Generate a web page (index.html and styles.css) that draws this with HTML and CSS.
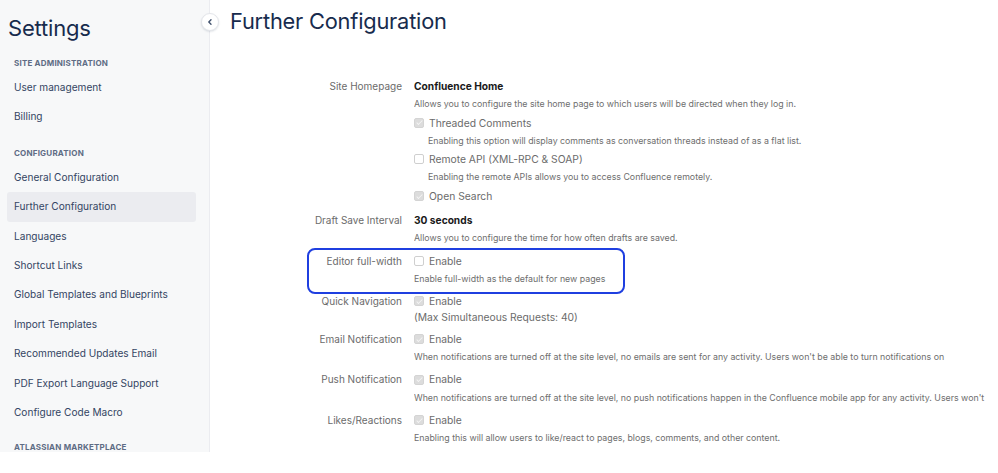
FILE: index.html
```html
<!DOCTYPE html>
<html lang="en">
<head>
  <meta charset="UTF-8">
  <meta name="viewport" content="width=device-width, initial-scale=1.0">
  <title>Further Configuration - Settings</title>
  <link rel="stylesheet" href="styles.css">
</head>
<body>

  <div class="layout">
    <!-- Settings sidebar -->
    <aside class="sidebar">
      <h2 class="sidebar-title">Settings</h2>

      <div class="nav-heading">Site administration</div>
      <a class="nav-item" href="#">User management</a>
      <a class="nav-item" href="#">Billing</a>

      <div class="nav-heading">Configuration</div>
      <a class="nav-item" href="#">General Configuration</a>
      <a class="nav-item selected" href="#">Further Configuration</a>
      <a class="nav-item" href="#">Languages</a>
      <a class="nav-item" href="#">Shortcut Links</a>
      <a class="nav-item" href="#">Global Templates and Blueprints</a>
      <a class="nav-item" href="#">Import Templates</a>
      <a class="nav-item" href="#">Recommended Updates Email</a>
      <a class="nav-item" href="#">PDF Export Language Support</a>
      <a class="nav-item" href="#">Configure Code Macro</a>

      <div class="nav-heading last">Atlassian Marketplace</div>
    </aside>

    <button class="collapse-btn" aria-label="Collapse sidebar">
      <svg width="8" height="8" viewBox="0 0 8 8">
        <path d="M5 1.8 L2.8 4 L5 6.2" fill="none" stroke="#42526e" stroke-width="1.4" stroke-linecap="round" stroke-linejoin="round"/>
      </svg>
    </button>

    <!-- Main content -->
    <main class="content">
      <h1 class="page-title">Further Configuration</h1>

      <div class="form">
        <div class="row">
          <div class="label">Site Homepage</div>
          <div class="field">
            <div class="value">Confluence Home</div>
            <div class="desc">Allows you to configure the site home page to which users will be directed when they log in.</div>
            <div class="check checked"><span class="box"></span>Threaded Comments</div>
            <div class="desc indent">Enabling this option will display comments as conversation threads instead of as a flat list.</div>
            <div class="check"><span class="box"></span>Remote API (XML-RPC &amp; SOAP)</div>
            <div class="desc indent">Enabling the remote APIs allows you to access Confluence remotely.</div>
            <div class="check checked"><span class="box"></span>Open Search</div>
          </div>
        </div>

        <div class="row wide-gap">
          <div class="label">Draft Save Interval</div>
          <div class="field">
            <div class="value">30 seconds</div>
            <div class="desc">Allows you to configure the time for how often drafts are saved.</div>
          </div>
        </div>

        <!-- highlighted row -->
        <div class="row highlight">
          <div class="label">Editor full-width</div>
          <div class="field">
            <div class="check"><span class="box"></span>Enable</div>
            <div class="desc">Enable full-width as the default for new pages</div>
          </div>
        </div>

        <div class="row">
          <div class="label">Quick Navigation</div>
          <div class="field">
            <div class="check checked"><span class="box"></span>Enable</div>
            <div class="note">(Max Simultaneous Requests: 40)</div>
          </div>
        </div>

        <div class="row">
          <div class="label">Email Notification</div>
          <div class="field">
            <div class="check checked"><span class="box"></span>Enable</div>
            <div class="desc">When notifications are turned off at the site level, no emails are sent for any activity. Users won't be able to turn notifications on</div>
          </div>
        </div>

        <div class="row">
          <div class="label">Push Notification</div>
          <div class="field">
            <div class="check checked"><span class="box"></span>Enable</div>
            <div class="desc">When notifications are turned off at the site level, no push notifications happen in the Confluence mobile app for any activity. Users won't</div>
          </div>
        </div>

        <div class="row">
          <div class="label">Likes/Reactions</div>
          <div class="field">
            <div class="check checked"><span class="box"></span>Enable</div>
            <div class="desc">Enabling this will allow users to like/react to pages, blogs, comments, and other content.</div>
          </div>
        </div>
      </div>
    </main>
  </div>

</body>
</html>
```

FILE: styles.css
```css
body {
  margin: 0;
  font-family: Inter, "Noto Sans", sans-serif;
  background-color: #fff;
  color: #172b4d;
  overflow: hidden;
}

.layout {
  display: flex;
  height: 452px;
  position: relative;
}

/* Sidebar */

.sidebar {
  width: 210px;
  flex-shrink: 0;
  box-sizing: border-box;
  background-color: #f7f8f9;
  border-right: 1px solid #ebecf0;
  padding: 12px 13px 0 7px;
  display: flex;
  flex-direction: column;
  overflow: hidden;
}

.sidebar-title {
  margin: 0 0 9px 1px;
  font-size: 22px;
  font-weight: 400;
  line-height: 32px;
  color: #172b4d;
  letter-spacing: -0.2px;
}

.nav-heading {
  flex-shrink: 0;
  margin-top: 11px;
  padding-left: 7px;
  height: 20px;
  line-height: 20px;
  font-size: 8px;
  font-weight: 700;
  text-transform: uppercase;
  letter-spacing: 0.2px;
  color: #5e6c84;
  white-space: nowrap;
}

.sidebar-title + .nav-heading {
  margin-top: 0;
}

.nav-heading.last {
  margin-top: 14px;
  height: 12px;
  line-height: 12px;
}

.nav-item {
  display: block;
  flex-shrink: 0;
  height: 29.4px;
  line-height: 29.4px;
  padding-left: 7px;
  border-radius: 3px;
  font-size: 10.1px;
  color: #344563;
  text-decoration: none;
  white-space: nowrap;
}

.nav-item.selected {
  background-color: #ebecf0;
}

.collapse-btn {
  position: absolute;
  left: 201px;
  top: 13px;
  width: 18px;
  height: 18px;
  padding: 0;
  border-radius: 50%;
  border: 1px solid #e4e6ea;
  background-color: #fff;
  box-shadow: 0 1px 2px rgba(9, 30, 66, 0.12);
  display: flex;
  align-items: center;
  justify-content: center;
  cursor: pointer;
}

/* Content */

.content {
  flex: 1;
  padding: 0 13px 0 20px;
  overflow: hidden;
}

.page-title {
  margin: 0;
  padding-top: 6px;
  font-size: 21.8px;
  font-weight: 400;
  line-height: 30px;
  color: #172b4d;
  letter-spacing: -0.2px;
  white-space: nowrap;
}

.form {
  margin-top: 41px;
}

.row {
  display: grid;
  grid-template-columns: 172px 1fr;
  column-gap: 12px;
  margin-top: 4px;
  line-height: 18.3px;
}

.row:first-child {
  margin-top: 0;
}

.row.wide-gap {
  margin-top: 6px;
}

.row.highlight {
  position: relative;
}

.row.highlight::after {
  content: "";
  position: absolute;
  left: 77px;
  top: -4px;
  width: 318px;
  height: 46px;
  box-sizing: border-box;
  border: 2px solid #1f3fe0;
  border-radius: 8px;
}

.label {
  text-align: right;
  font-size: 10px;
  color: #6b6b6b;
  white-space: nowrap;
}

.field {
  min-width: 0;
  overflow: hidden;
}

.value {
  font-size: 10.2px;
  font-weight: 700;
  color: #1a1a1a;
}

.desc {
  font-size: 8.8px;
  color: #6e6e6e;
  white-space: nowrap;
}

.desc.indent {
  padding-left: 14px;
}

.note {
  margin-top: -3px;
  font-size: 10.3px;
  color: #6b6b6b;
}

.check {
  display: flex;
  align-items: center;
  gap: 5px;
  font-size: 10.3px;
  color: #6b6b6b;
}

.check .box {
  width: 10px;
  height: 10px;
  box-sizing: border-box;
  border: 1px solid #cfcfcf;
  border-radius: 2px;
  background-color: #fff;
  position: relative;
}

.check.checked .box {
  background-color: #dcdcdc;
  border-color: #d4d4d4;
}

.check.checked .box::after {
  content: "";
  position: absolute;
  left: 2.8px;
  top: 0.6px;
  width: 2.2px;
  height: 5px;
  border: solid #f4f4f4;
  border-width: 0 1.3px 1.3px 0;
  transform: rotate(45deg);
}
```
